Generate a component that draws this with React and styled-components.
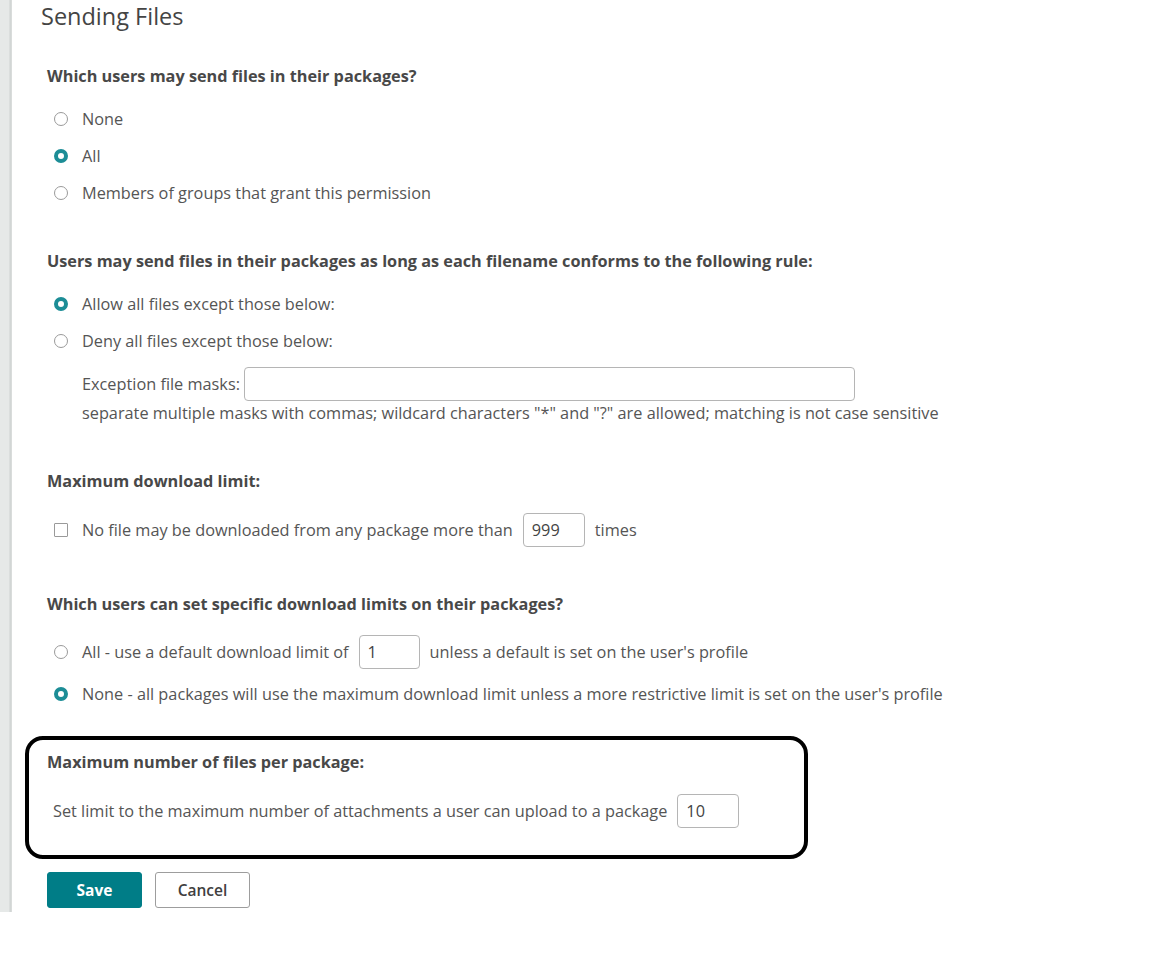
import React from 'react';
import styled, {createGlobalStyle} from 'styled-components';

const GlobalStyle = createGlobalStyle`
  body {
    margin: 0;
    background: #fff;
    font-family: "Open Sans", "Liberation Sans", sans-serif;
    color: #555;
  }
`;

const Frame = styled.div`
  display: flex;
  width: 1156px;
`;

const Strip = styled.div`
  width: 12px;
  flex-shrink: 0;
  background: linear-gradient(to right, #e6e9e8 0, #e6e9e8 9px, #cfd3d2 10px, #dcdfde 12px);
`;

const Main = styled.div`
  flex: 1;
  padding: 0 0 4px 29px;
`;

const Title = styled.h1`
  margin: 0;
  font-size: 23.5px;
  line-height: 32px;
  font-weight: 400;
  color: #444;
`;

const Section = styled.section`
  padding-left: 6px;
  margin-top: ${p => p.$top}px;
`;

const Heading = styled.h2`
  margin: 0;
  font-size: 16.25px;
  line-height: 22px;
  font-weight: 700;
  color: #484848;
`;

const Options = styled.div`
  display: flex;
  flex-direction: column;
  gap: ${p => p.$gap || 15}px;
  margin-top: ${p => p.$top || 21}px;
`;

const Row = styled.div`
  display: flex;
  align-items: center;
  min-height: 22px;
  font-size: 16.3px;
  line-height: 22px;
  padding-left: ${p => p.$indent || 0}px;
`;

const Radio = styled.span`
  width: 14px;
  height: 14px;
  box-sizing: border-box;
  border-radius: 50%;
  margin: 0 14px 0 7px;
  flex-shrink: 0;
  border: ${p => (p.$on ? '4px solid #1c8d96' : '1px solid #9a9a9a')};
  background: #fff;
`;

const Check = styled.span`
  width: 14px;
  height: 14px;
  box-sizing: border-box;
  border: 1px solid #9a9a9a;
  border-radius: 1px;
  margin: 0 14px 0 7px;
  flex-shrink: 0;
`;

const Field = styled.div`
  box-sizing: border-box;
  width: ${p => p.$w}px;
  height: 34px;
  border: 1px solid #b5b5b5;
  border-radius: 4px;
  padding: 0 8px;
  margin: 0 ${p => p.$mr ?? 10}px 0 ${p => p.$ml ?? 10}px;
  display: flex;
  align-items: center;
  font-size: 16.3px;
  color: #444;
  background: #fff;
`;

const Sub = styled.div`
  padding-left: 35px;
  margin-top: 15px;
`;

const Help = styled.div`
  font-size: 16.3px;
  line-height: 22px;
  margin-top: 1px;
`;

const Highlight = styled.div`
  box-sizing: border-box;
  width: 783px;
  margin: 31px 0 0 -16px;
  border: 4px solid #000;
  border-radius: 18px;
  padding: 11px 0 27px 18px;
`;

const Buttons = styled.div`
  display: flex;
  gap: 13px;
  margin: 13px 0 0 6px;
`;

const Button = styled.button`
  box-sizing: border-box;
  width: 95px;
  height: 36px;
  border-radius: 3px;
  font-family: inherit;
  font-size: 15.5px;
  font-weight: ${p => (p.$primary ? 700 : 600)};
  border: 1px solid ${p => (p.$primary ? '#007d87' : '#9d9d9d')};
  background: ${p => (p.$primary ? '#007d87' : '#fff')};
  color: ${p => (p.$primary ? '#fff' : '#3f3f3f')};
`;

export default function App() {
  return (
    <>
      <GlobalStyle />
      <Frame>
        <Strip />
        <Main>
          <Title>Sending Files</Title>

          <Section $top={33}>
            <Heading>Which users may send files in their packages?</Heading>
            <Options>
              <Row><Radio />None</Row>
              <Row><Radio $on />All</Row>
              <Row><Radio />Members of groups that grant this permission</Row>
            </Options>
          </Section>

          <Section $top={46}>
            <Heading>Users may send files in their packages as long as each filename conforms to the following rule:</Heading>
            <Options>
              <Row><Radio $on />Allow all files except those below:</Row>
              <Row><Radio />Deny all files except those below:</Row>
            </Options>
            <Sub>
              <Row>Exception file masks:<Field $w={611} $ml={4} $mr={0} /></Row>
              <Help>separate multiple masks with commas; wildcard characters "*" and "?" are allowed; matching is not case sensitive</Help>
            </Sub>
          </Section>

          <Section $top={46}>
            <Heading>Maximum download limit:</Heading>
            <Options>
              <Row><Check />No file may be downloaded from any package more than<Field $w={62}>999</Field>times</Row>
            </Options>
          </Section>

          <Section $top={46}>
            <Heading>Which users can set specific download limits on their packages?</Heading>
            <Options $gap={14} $top={20}>
              <Row><Radio />All - use a default download limit of<Field $w={61}>1</Field>unless a default is set on the user's profile</Row>
              <Row><Radio $on />None - all packages will use the maximum download limit unless a more restrictive limit is set on the user's profile</Row>
            </Options>
          </Section>

          <Highlight>
            <Heading>Maximum number of files per package:</Heading>
            <Options>
              <Row $indent={6}>Set limit to the maximum number of attachments a user can upload to a package<Field $w={62}>10</Field></Row>
            </Options>
          </Highlight>

          <Buttons>
            <Button $primary>Save</Button>
            <Button>Cancel</Button>
          </Buttons>
        </Main>
      </Frame>
    </>
  );
}
